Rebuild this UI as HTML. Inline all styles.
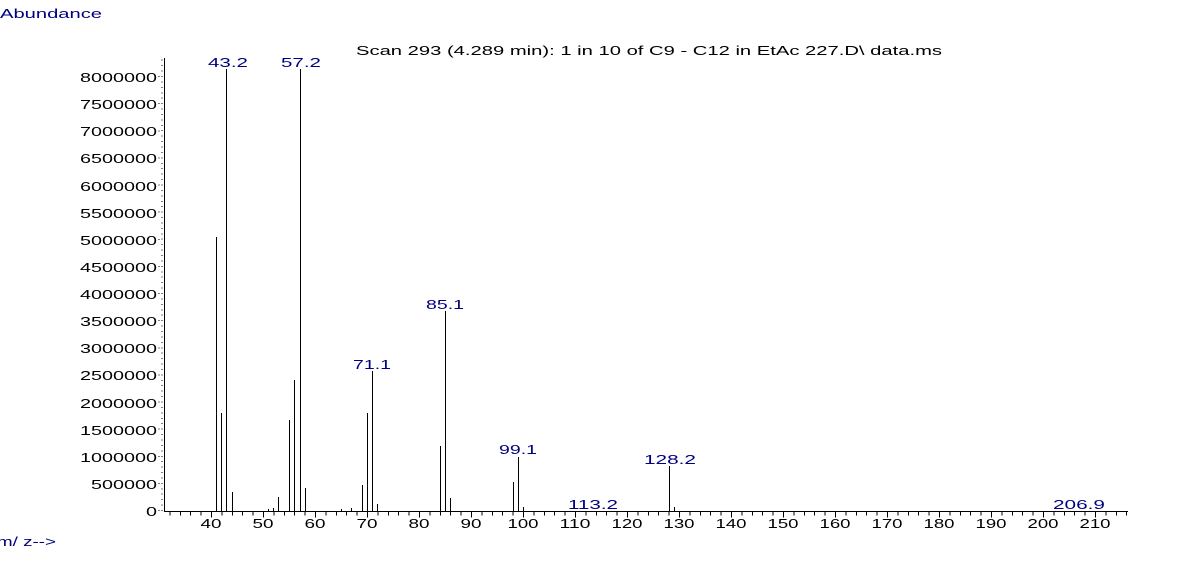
<!DOCTYPE html>
<html><head><meta charset="utf-8"><style>
html,body{margin:0;padding:0;background:#fff;width:1179px;height:567px;overflow:hidden}
svg{display:block}
text{font-family:"Liberation Sans",Arial,sans-serif;font-size:13px}
.b{fill:#000080}
.k{fill:#000}
</style></head><body>
<svg width="1179" height="567" viewBox="0 0 1179 567" xmlns="http://www.w3.org/2000/svg">
<text x="0" y="18" class="b" textLength="102" lengthAdjust="spacingAndGlyphs">Abundance</text>
<text x="356" y="55" class="k" textLength="586" lengthAdjust="spacingAndGlyphs">Scan 293 (4.289 min): 1 in 10 of C9 - C12 in EtAc 227.D\ data.ms</text>
<text x="-3" y="546" class="b" textLength="59" lengthAdjust="spacingAndGlyphs">m/ z--&gt;</text>
<g stroke="#000" stroke-width="1" shape-rendering="crispEdges">
<line x1="164.5" y1="58" x2="164.5" y2="511.5"/>
<line x1="164" y1="511.5" x2="1128" y2="511.5"/>
<line x1="162" y1="511" x2="162" y2="58" stroke-dasharray="1 4.425"/>
<line x1="159" y1="511" x2="159" y2="70" stroke-dasharray="1 26.125"/>
<line x1="169.4" y1="512" x2="1128" y2="512" stroke-dasharray="1 9.4"/>
<line x1="169.4" y1="513" x2="1128" y2="513" stroke-dasharray="1 9.4"/>
<line x1="169.4" y1="514" x2="1128" y2="514" stroke-dasharray="1 9.4"/>
<line x1="169.4" y1="515" x2="1128" y2="515" stroke-dasharray="1 9.4"/>
<line x1="211" y1="516" x2="1128" y2="516" stroke-dasharray="1 51"/>
<line x1="211" y1="517" x2="1128" y2="517" stroke-dasharray="1 51"/>
</g>
<g class="k" text-anchor="end" lengthAdjust="spacingAndGlyphs">
<text x="157" y="516" textLength="11" lengthAdjust="spacingAndGlyphs">0</text>
<text x="157" y="489" textLength="66" lengthAdjust="spacingAndGlyphs">500000</text>
<text x="157" y="462" textLength="77" lengthAdjust="spacingAndGlyphs">1000000</text>
<text x="157" y="435" textLength="77" lengthAdjust="spacingAndGlyphs">1500000</text>
<text x="157" y="408" textLength="77" lengthAdjust="spacingAndGlyphs">2000000</text>
<text x="157" y="380" textLength="77" lengthAdjust="spacingAndGlyphs">2500000</text>
<text x="157" y="353" textLength="77" lengthAdjust="spacingAndGlyphs">3000000</text>
<text x="157" y="326" textLength="77" lengthAdjust="spacingAndGlyphs">3500000</text>
<text x="157" y="299" textLength="77" lengthAdjust="spacingAndGlyphs">4000000</text>
<text x="157" y="272" textLength="77" lengthAdjust="spacingAndGlyphs">4500000</text>
<text x="157" y="245" textLength="77" lengthAdjust="spacingAndGlyphs">5000000</text>
<text x="157" y="218" textLength="77" lengthAdjust="spacingAndGlyphs">5500000</text>
<text x="157" y="191" textLength="77" lengthAdjust="spacingAndGlyphs">6000000</text>
<text x="157" y="163" textLength="77" lengthAdjust="spacingAndGlyphs">6500000</text>
<text x="157" y="136" textLength="77" lengthAdjust="spacingAndGlyphs">7000000</text>
<text x="157" y="109" textLength="77" lengthAdjust="spacingAndGlyphs">7500000</text>
<text x="157" y="82" textLength="77" lengthAdjust="spacingAndGlyphs">8000000</text>
</g>
<g class="k" text-anchor="middle">
<text x="211" y="528" textLength="21" lengthAdjust="spacingAndGlyphs">40</text><text x="263" y="528" textLength="21" lengthAdjust="spacingAndGlyphs">50</text><text x="315" y="528" textLength="21" lengthAdjust="spacingAndGlyphs">60</text>
<text x="367" y="528" textLength="21" lengthAdjust="spacingAndGlyphs">70</text><text x="419" y="528" textLength="21" lengthAdjust="spacingAndGlyphs">80</text><text x="471" y="528" textLength="21" lengthAdjust="spacingAndGlyphs">90</text>
<text x="523" y="528" textLength="31" lengthAdjust="spacingAndGlyphs">100</text><text x="575" y="528" textLength="31" lengthAdjust="spacingAndGlyphs">110</text><text x="627" y="528" textLength="31" lengthAdjust="spacingAndGlyphs">120</text>
<text x="679" y="528" textLength="31" lengthAdjust="spacingAndGlyphs">130</text><text x="731" y="528" textLength="31" lengthAdjust="spacingAndGlyphs">140</text><text x="783" y="528" textLength="31" lengthAdjust="spacingAndGlyphs">150</text>
<text x="835" y="528" textLength="31" lengthAdjust="spacingAndGlyphs">160</text><text x="887" y="528" textLength="31" lengthAdjust="spacingAndGlyphs">170</text><text x="939" y="528" textLength="31" lengthAdjust="spacingAndGlyphs">180</text>
<text x="991" y="528" textLength="31" lengthAdjust="spacingAndGlyphs">190</text><text x="1043" y="528" textLength="31" lengthAdjust="spacingAndGlyphs">200</text><text x="1095" y="528" textLength="31" lengthAdjust="spacingAndGlyphs">210</text>
</g>
<g stroke="#000" stroke-width="1" shape-rendering="crispEdges">
<line x1="216.5" y1="511" x2="216.5" y2="237"/>
<line x1="221.5" y1="511" x2="221.5" y2="413"/>
<line x1="226.5" y1="511" x2="226.5" y2="69"/>
<line x1="232.5" y1="511" x2="232.5" y2="492"/>
<line x1="268.5" y1="511" x2="268.5" y2="509"/>
<line x1="273.5" y1="511" x2="273.5" y2="508"/>
<line x1="278.5" y1="511" x2="278.5" y2="497"/>
<line x1="289.5" y1="511" x2="289.5" y2="420"/>
<line x1="294.5" y1="511" x2="294.5" y2="380"/>
<line x1="300.5" y1="511" x2="300.5" y2="69"/>
<line x1="305.5" y1="511" x2="305.5" y2="488"/>
<line x1="341.5" y1="511" x2="341.5" y2="509"/>
<line x1="351.5" y1="511" x2="351.5" y2="508"/>
<line x1="362.5" y1="511" x2="362.5" y2="485"/>
<line x1="367.5" y1="511" x2="367.5" y2="413"/>
<line x1="372.5" y1="511" x2="372.5" y2="371"/>
<line x1="377.5" y1="511" x2="377.5" y2="504"/>
<line x1="440.5" y1="511" x2="440.5" y2="446"/>
<line x1="445.5" y1="511" x2="445.5" y2="311"/>
<line x1="450.5" y1="511" x2="450.5" y2="498"/>
<line x1="513.5" y1="511" x2="513.5" y2="482"/>
<line x1="518.5" y1="511" x2="518.5" y2="457"/>
<line x1="523.5" y1="511" x2="523.5" y2="507"/>
<line x1="669.5" y1="511" x2="669.5" y2="466"/>
<line x1="674.5" y1="511" x2="674.5" y2="507"/>
</g>
<g class="b" text-anchor="middle">
<text x="228" y="67" textLength="40" lengthAdjust="spacingAndGlyphs">43.2</text>
<text x="301" y="67" textLength="40" lengthAdjust="spacingAndGlyphs">57.2</text>
<text x="372" y="369" textLength="38" lengthAdjust="spacingAndGlyphs">71.1</text>
<text x="445" y="309" textLength="38" lengthAdjust="spacingAndGlyphs">85.1</text>
<text x="518" y="454" textLength="38" lengthAdjust="spacingAndGlyphs">99.1</text>
<text x="593" y="509" textLength="50" lengthAdjust="spacingAndGlyphs">113.2</text>
<text x="670" y="464" textLength="52" lengthAdjust="spacingAndGlyphs">128.2</text>
<text x="1079" y="509" textLength="52" lengthAdjust="spacingAndGlyphs">206.9</text>
</g>
</svg>
</body></html>
